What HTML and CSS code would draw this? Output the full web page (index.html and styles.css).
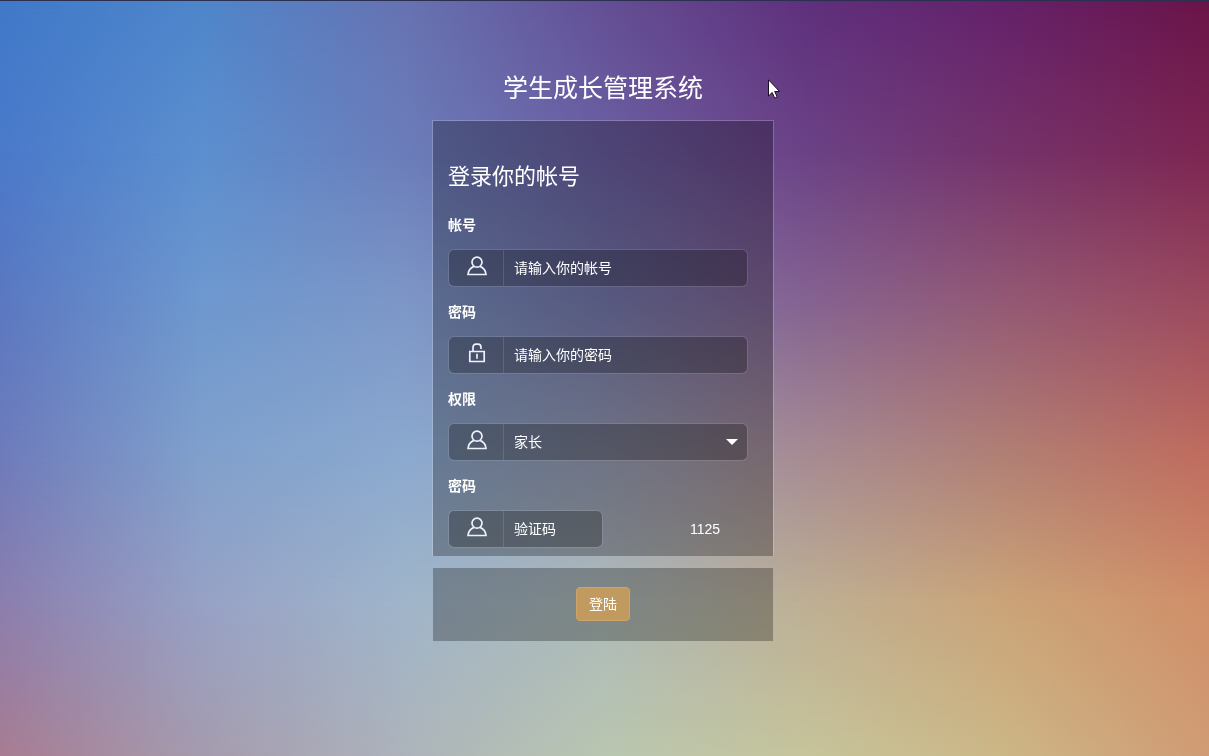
FILE: index.html
```html
<!DOCTYPE html>
<html lang="zh-CN">
<head>
<meta charset="utf-8">
<meta name="viewport" content="width=device-width, initial-scale=1">
<title>学生成长管理系统</title>
<link rel="stylesheet" href="styles.css">
</head>
<body>
<svg class="symbols" aria-hidden="true">
  <symbol id="user" viewBox="0 0 20 20">
    <circle cx="10" cy="6.200" r="5"/>
    <path d="M7 10.400C3.400 11.800 1.300 14.700 1 18.500H19C18.700 14.700 16.600 11.800 13 10.400"/>
  </symbol>
  <symbol id="lock" viewBox="0 0 20 20">
    <path d="M2.800 8.500H17.200V18.500H2.800Z"/>
    <path d="M6 8.500V4.500C6 2.500 7.200 1.200 9 1.200H11C12.800 1.200 14 2.500 14 4.500V6"/>
    <path d="M10 10.800V15.800"/>
  </symbol>
</svg>
<div class="backdrop" aria-hidden="true">
  <div class="tone tone-1"></div>
  <div class="tone tone-2"></div>
  <div class="tone tone-3"></div>
  <div class="tone tone-4"></div>
  <div class="tone tone-5"></div>
  <div class="tone tone-6"></div>
</div>
<main class="page">
  <h1 class="title">学生成长管理系统</h1>
  <form class="login">
    <section class="panel">
      <h2 class="heading">登录你的帐号</h2>
      <div class="group">
        <label class="label" for="account">帐号</label>
        <div class="field">
          <span class="addon"><svg class="icon"><use href="#user"/></svg></span>
          <input class="control" id="account" type="text" placeholder="请输入你的帐号">
        </div>
      </div>
      <div class="group">
        <label class="label" for="password">密码</label>
        <div class="field">
          <span class="addon"><svg class="icon"><use href="#lock"/></svg></span>
          <input class="control" id="password" type="password" placeholder="请输入你的密码">
        </div>
      </div>
      <div class="group">
        <label class="label" for="role">权限</label>
        <div class="field">
          <span class="addon"><svg class="icon"><use href="#user"/></svg></span>
          <select class="control" id="role"><option>家长</option></select>
          <span class="caret"></span>
        </div>
      </div>
      <div class="group">
        <label class="label" for="captcha">密码</label>
        <div class="captcha">
          <div class="field field-short">
            <span class="addon"><svg class="icon"><use href="#user"/></svg></span>
            <input class="control" id="captcha" type="text" placeholder="验证码">
          </div>
          <span class="code">1125</span>
        </div>
      </div>
    </section>
    <footer class="actions">
      <button class="submit" type="button">登陆</button>
    </footer>
  </form>
</main>
<svg class="pointer" viewBox="0 0 12 20" aria-hidden="true">
  <path d="M.5 .8V17L4.200 13.500L6.700 19.200L9.200 18.100L6.700 12.500H11.600Z"/>
</svg>
</body>
</html>
```
FILE: styles.css
```css
* { box-sizing: border-box; }

body {
  margin: 0;
  min-height: 100vh;
  border-top: 1px solid #2b3050;
  color: #fff;
  font: 14px/20px "Liberation Sans", "Noto Sans CJK SC", sans-serif;
}

.symbols { display: none; }

/* Colour mesh: each tone is one row, faded in over the row above it. */
.backdrop {
  position: fixed;
  inset: 1px 0 0;
  z-index: -1;
}
.tone { position: absolute; inset: 0; }
.tone-1 { background: linear-gradient(90deg, #4079c9, #4e86cb, #6773b2, #644f95, #5f307d, #65216a, #6a1448); }
.tone-2 {
  background: linear-gradient(90deg, #4a79ca, #5c8fcf, #6b7dba, #6b5fa2, #6b4286, #75326a, #7c2652);
  mask-image: linear-gradient(transparent 0%, #000 20%);
}
.tone-3 {
  background: linear-gradient(90deg, #5b78c1, #6e98cf, #7d97c7, #787bb0, #856391, #945974, #9c4a5e);
  mask-image: linear-gradient(transparent 20%, #000 40%);
}
.tone-4 {
  background: linear-gradient(90deg, #6e7bbb, #80a0cc, #8ba9cf, #9a9fb8, #a68b93, #b17f74, #c06c5e);
  mask-image: linear-gradient(transparent 40%, #000 60%);
}
.tone-5 {
  background: linear-gradient(90deg, #8c7eae, #97a1c5, #a0b5ca, #adbab9, #beb094, #cba478, #d08f69);
  mask-image: linear-gradient(transparent 60%, #000 80%);
}
.tone-6 {
  background: linear-gradient(90deg, #a87c92, #a59bae, #adb3bb, #b9c6b0, #c6c49b, #ccb686, #d09b74);
  mask-image: linear-gradient(transparent 80%, #000 100%);
}

.page {
  display: flex;
  flex-direction: column;
  align-items: center;
  padding: 71px 19px 16px 16px;
}
.title {
  margin: 0 0 16px;
  font-size: 25px;
  font-weight: 400;
  line-height: 32px;
}
.login { width: 100%; max-width: 340px; }

.panel {
  margin: 0 -1px;
  padding: 44px 25px 8px 15px;
  border: 1px solid rgba(255, 255, 255, .2);
  border-bottom: 0;
  background: rgba(0, 0, 0, .27);
  background-clip: padding-box;
}
.heading {
  margin: 0 0 26px;
  font-size: 22px;
  font-weight: 400;
  line-height: 24px;
}
.group + .group { margin-top: 15px; }
.label {
  display: block;
  margin-bottom: 14px;
  font-weight: 700;
}
.field {
  position: relative;
  display: flex;
  height: 38px;
  border: 1px solid rgba(255, 255, 255, .1);
  border-radius: 6px;
  background: rgba(0, 0, 0, .25);
  background-clip: padding-box;
}
.addon {
  display: flex;
  flex: none;
  justify-content: center;
  width: 55px;
  padding: 6px 0 0 2px;
  border-right: 1px solid rgba(255, 255, 255, .12);
}
.icon {
  width: 20px;
  height: 20px;
  fill: none;
  stroke: #eef0fa;
  stroke-width: 1.7;
}
.control {
  flex: 1;
  min-width: 0;
  padding: 0 10px;
  border: 0;
  outline: 0;
  background: transparent;
  color: #fff;
  font: inherit;
  appearance: none;
}
.control::placeholder { color: #fff; opacity: 1; }
.control option { color: #222; }
.caret {
  position: absolute;
  top: 15px;
  right: 9px;
  border: 6px solid transparent;
  border-top-color: #fff;
  border-bottom: 0;
  pointer-events: none;
}
.captcha {
  display: flex;
  align-items: center;
  justify-content: space-between;
}
.field-short { width: 155px; }
.code { width: 86px; text-align: center; }

.actions {
  display: flex;
  justify-content: center;
  margin-top: 12px;
  padding: 19px 0 20px;
  background: rgba(0, 0, 0, .27);
}
.submit {
  height: 34px;
  padding: 0 12px;
  border: 1px solid #d0a466;
  border-radius: 4px;
  background: #c09a5e;
  color: #fff;
  font: inherit;
}

.pointer {
  position: absolute;
  top: 79px;
  left: calc(50% + 163px);
  width: 12px;
  height: 20px;
  fill: #fff;
  stroke: #1b1028;
  pointer-events: none;
}
```
